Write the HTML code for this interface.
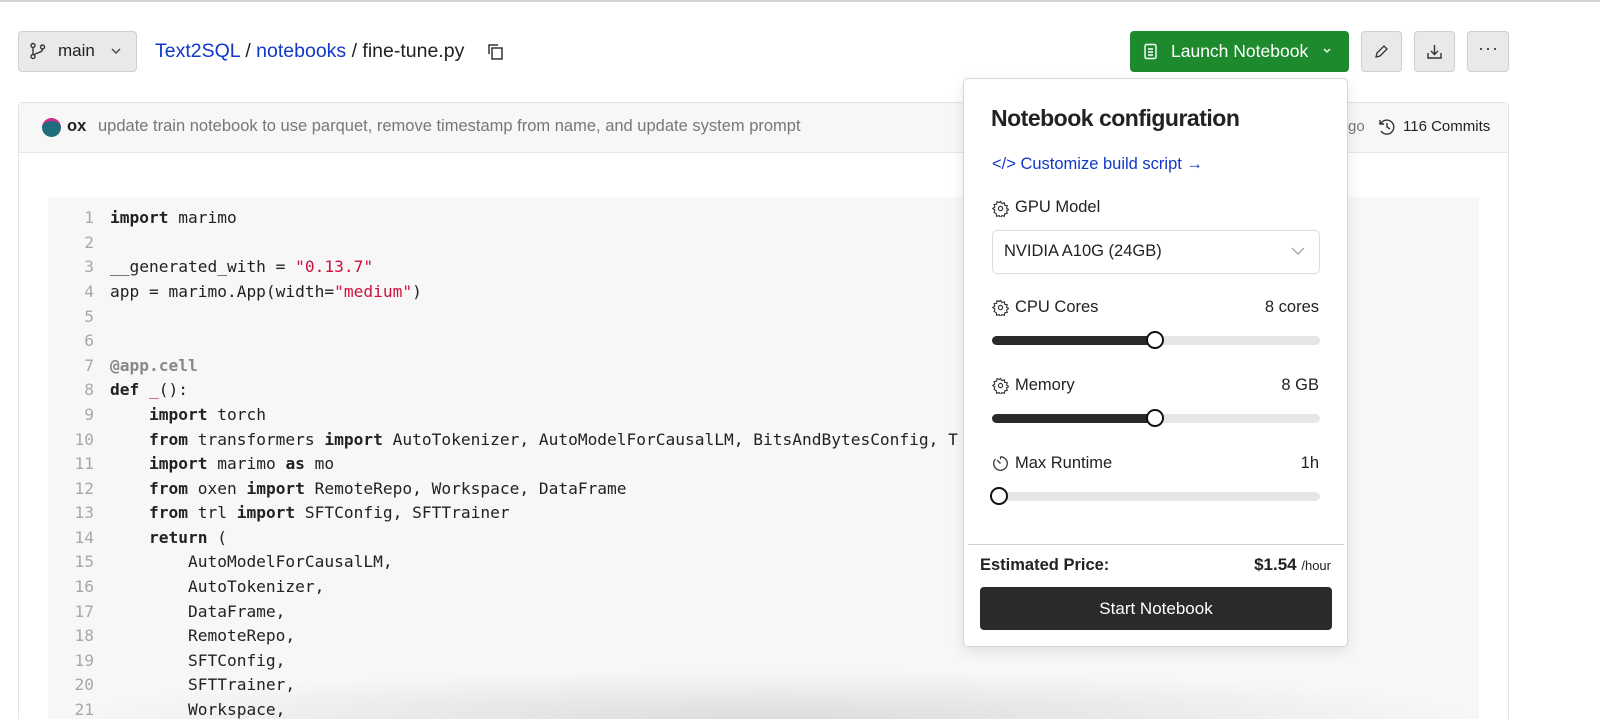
<!DOCTYPE html>
<html style="width:1600px;height:719px;overflow:hidden"><head><style>
*{box-sizing:border-box;margin:0;padding:0}
body{width:1600px;height:719px;overflow:hidden;background:#fff;font-family:"Liberation Sans",sans-serif;color:#222;position:relative}
.topline{position:absolute;left:0;top:0;width:1600px;height:2px;background:#d4d4d4}
.btn{position:absolute;border:1px solid #cfcfcf;background:#e9e9e9;border-radius:4px}
.abs{position:absolute}
.box{position:absolute;left:18px;top:102px;width:1491px;height:617px;border:1px solid #e3e3e3;border-bottom:none;border-radius:4px 4px 0 0}
.hdr{position:absolute;left:0;top:0;width:100%;height:50px;background:#f7f7f7;border-bottom:1px solid #e6e6e6}
.code{position:absolute;left:48px;top:197px;width:1431px;height:522px;background:#f7f7f7;font-family:"DejaVu Sans Mono",monospace;font-size:16.2px;overflow:hidden}
.ln{position:absolute;left:0;width:46px;text-align:right;color:#a8a8a8}
.tx{position:absolute;left:62px;white-space:pre;color:#222}
b{font-weight:bold}
.s{color:#d0103a}
.pop{position:absolute;left:963px;top:78px;width:385px;height:569px;background:#fff;border:1px solid #d6d6d6;border-radius:5px;box-shadow:0 4px 14px rgba(0,0,0,.10)}
.lbl{position:absolute;left:51px;font-size:16.5px;color:#222}
.val{position:absolute;right:28px;font-size:16.5px;color:#222}
.track{position:absolute;left:28px;width:328px;height:9px;border-radius:5px;background:#e6e6e6}
.fill{position:absolute;left:0;top:0;height:9px;border-radius:5px;background:#2a2a2a}
.knob{position:absolute;width:18px;height:18px;border-radius:50%;background:#fff;border:2px solid #111;top:-5px}
.shade{position:absolute;left:60px;top:670px;width:1420px;height:49px;background:radial-gradient(ellipse 50% 100% at 50% 100%,rgba(0,0,0,.11),rgba(0,0,0,0) 100%)}
</style></head><body>
<div class="topline"></div>

<div class="btn" style="left:18px;top:31px;width:119px;height:41px"></div>
<svg class="abs" style="left:29px;top:42px" width="18" height="18" viewBox="0 0 18 18" fill="none" stroke="#333" stroke-width="1.4"><circle cx="4" cy="3.5" r="2"/><circle cx="4" cy="14.5" r="2"/><circle cx="13.5" cy="5" r="2"/><path d="M4 5.5v7M13.5 7c0 4-6 3-8.5 6"/></svg>
<div class="abs" style="left:58px;top:41px;font-size:17px;color:#222">main</div>
<svg class="abs" style="left:110px;top:47px" width="12" height="8" viewBox="0 0 12 8" fill="none" stroke="#444" stroke-width="1.4"><path d="M2 2l4 4 4-4"/></svg>

<div class="abs" style="left:155px;top:40px;font-size:19.5px;color:#222;white-space:nowrap"><span style="color:#1238c8">Text2SQL</span> / <span style="color:#1238c8">notebooks</span> / fine-tune.py</div>
<svg class="abs" style="left:486px;top:42px" width="20" height="20" viewBox="0 0 20 20" fill="none" stroke="#333" stroke-width="1.5"><path d="M3 12V3h9"/><rect x="6" y="6" width="10" height="11"/></svg>

<div class="abs" style="left:1130px;top:31px;width:219px;height:41px;background:#1e8a2e;border-radius:4px"></div>
<svg class="abs" style="left:1143px;top:43px" width="16" height="18" viewBox="0 0 16 18" fill="none" stroke="#fff" stroke-width="1.4"><rect x="2" y="1.5" width="11" height="14" rx="1.5"/><path d="M5 6h5M5 9h5M5 12h5"/></svg>
<div class="abs" style="left:1171px;top:41px;font-size:17.5px;color:#fff">Launch Notebook</div>
<svg class="abs" style="left:1322px;top:47px" width="10" height="8" viewBox="0 0 10 8" fill="none" stroke="#fff" stroke-width="1.3"><path d="M2 2l3 3 3-3"/></svg>

<div class="btn" style="left:1361px;top:31px;width:41px;height:41px"></div>
<svg class="abs" style="left:1373px;top:43px" width="17" height="17" viewBox="0 0 17 17" fill="none" stroke="#333" stroke-width="1.3"><path d="M3 14l1-4 7-7 3 3-7 7z"/></svg>
<div class="btn" style="left:1414px;top:31px;width:41px;height:41px"></div>
<svg class="abs" style="left:1425px;top:42px" width="19" height="19" viewBox="0 0 19 19" fill="none" stroke="#333" stroke-width="1.4"><path d="M9.5 3v9M6 9l3.5 3.5L13 9M3 11v5h13v-5"/></svg>
<div class="btn" style="left:1467px;top:31px;width:42px;height:41px"></div>
<div class="abs" style="left:1478px;top:38px;font-size:18px;color:#333;letter-spacing:1px">···</div>

<div class="box"><div class="hdr"></div></div>
<div class="abs" style="left:42px;top:118px;width:19px;height:19px;border-radius:50%;background:#1e6d7c;border-top:3px solid #d6278a"></div>
<div class="abs" style="left:67px;top:117px;font-size:16.5px;font-weight:bold;color:#222">ox</div>
<div class="abs" style="left:98px;top:117px;font-size:16.5px;color:#777;white-space:nowrap">update train notebook to use parquet, remove timestamp from name, and update system prompt</div>
<div class="abs" style="left:1348px;top:118px;font-size:15px;color:#777">go</div>
<svg class="abs" style="left:1377px;top:117px" width="20" height="20" viewBox="0 0 20 20" fill="none" stroke="#333" stroke-width="1.4"><path d="M3.5 7A7 7 0 1 1 4 14M3 3v4h4M10 6v4l3 2"/></svg>
<div class="abs" style="left:1403px;top:118px;font-size:15px;color:#222">116 Commits</div>

<div class="code">
<div class="ln" style="top:11px">1</div><div class="tx" style="top:11px"><b>import</b> marimo</div>
<div class="ln" style="top:36px">2</div>
<div class="ln" style="top:60px">3</div><div class="tx" style="top:60px">__generated_with = <span class="s">"0.13.7"</span></div>
<div class="ln" style="top:85px">4</div><div class="tx" style="top:85px">app = marimo.App(width=<span class="s">"medium"</span>)</div>
<div class="ln" style="top:110px">5</div>
<div class="ln" style="top:134px">6</div>
<div class="ln" style="top:159px">7</div><div class="tx" style="top:159px;color:#888"><b>@app.cell</b></div>
<div class="ln" style="top:183px">8</div><div class="tx" style="top:183px"><b>def</b> <span class="s">_</span>():</div>
<div class="ln" style="top:208px">9</div><div class="tx" style="top:208px">    <b>import</b> torch</div>
<div class="ln" style="top:233px">10</div><div class="tx" style="top:233px">    <b>from</b> transformers <b>import</b> AutoTokenizer, AutoModelForCausalLM, BitsAndBytesConfig, T</div>
<div class="ln" style="top:257px">11</div><div class="tx" style="top:257px">    <b>import</b> marimo <b>as</b> mo</div>
<div class="ln" style="top:282px">12</div><div class="tx" style="top:282px">    <b>from</b> oxen <b>import</b> RemoteRepo, Workspace, DataFrame</div>
<div class="ln" style="top:306px">13</div><div class="tx" style="top:306px">    <b>from</b> trl <b>import</b> SFTConfig, SFTTrainer</div>
<div class="ln" style="top:331px">14</div><div class="tx" style="top:331px">    <b>return</b> (</div>
<div class="ln" style="top:355px">15</div><div class="tx" style="top:355px">        AutoModelForCausalLM,</div>
<div class="ln" style="top:380px">16</div><div class="tx" style="top:380px">        AutoTokenizer,</div>
<div class="ln" style="top:405px">17</div><div class="tx" style="top:405px">        DataFrame,</div>
<div class="ln" style="top:429px">18</div><div class="tx" style="top:429px">        RemoteRepo,</div>
<div class="ln" style="top:454px">19</div><div class="tx" style="top:454px">        SFTConfig,</div>
<div class="ln" style="top:478px">20</div><div class="tx" style="top:478px">        SFTTrainer,</div>
<div class="ln" style="top:503px">21</div><div class="tx" style="top:503px">        Workspace,</div>
</div>
<div class="shade"></div>

<div class="pop">
<div class="abs" style="left:27px;top:26px;font-size:23px;font-weight:bold;color:#222;letter-spacing:-0.5px">Notebook configuration</div>
<div class="abs" style="left:28px;top:76px;font-size:16.5px;color:#1238c8">&lt;/&gt; Customize build script →</div>
<svg class="abs" style="left:28px;top:121px" width="17" height="17" viewBox="0 0 24 24" fill="none" stroke="#333" stroke-width="1.6"><circle cx="12" cy="12" r="3"/><path d="M12 2l2 3 3.5-1 .5 3.5 3.5.5-1 3.5 3 2-3 2 1 3.5-3.5.5-.5 3.5-3.5-1-2 3-2-3-3.5 1-.5-3.5L3 17.5 4 14l-3-2 3-2-1-3.5L6.5 6 7 2.5 10.5 3.5z"/></svg>
<div class="lbl" style="top:119px">GPU Model</div>
<div class="abs" style="left:28px;top:151px;width:328px;height:44px;border:1px solid #dcdcdc;border-radius:5px"></div>
<div class="abs" style="left:40px;top:163px;font-size:16.5px;color:#222">NVIDIA A10G (24GB)</div>
<svg class="abs" style="left:326px;top:167px" width="16" height="10" viewBox="0 0 16 10" fill="none" stroke="#aaa" stroke-width="1.5"><path d="M2 2l6 6 6-6"/></svg>

<svg class="abs" style="left:28px;top:220px" width="17" height="17" viewBox="0 0 24 24" fill="none" stroke="#333" stroke-width="1.6"><circle cx="12" cy="12" r="3"/><path d="M12 2l2 3 3.5-1 .5 3.5 3.5.5-1 3.5 3 2-3 2 1 3.5-3.5.5-.5 3.5-3.5-1-2 3-2-3-3.5 1-.5-3.5L3 17.5 4 14l-3-2 3-2-1-3.5L6.5 6 7 2.5 10.5 3.5z"/></svg>
<div class="lbl" style="top:219px">CPU Cores</div><div class="val" style="top:219px">8 cores</div>
<div class="track" style="top:257px"><div class="fill" style="width:164px"></div><div class="knob" style="left:154px"></div></div>

<svg class="abs" style="left:28px;top:298px" width="17" height="17" viewBox="0 0 24 24" fill="none" stroke="#333" stroke-width="1.6"><circle cx="12" cy="12" r="3"/><path d="M12 2l2 3 3.5-1 .5 3.5 3.5.5-1 3.5 3 2-3 2 1 3.5-3.5.5-.5 3.5-3.5-1-2 3-2-3-3.5 1-.5-3.5L3 17.5 4 14l-3-2 3-2-1-3.5L6.5 6 7 2.5 10.5 3.5z"/></svg>
<div class="lbl" style="top:297px">Memory</div><div class="val" style="top:297px">8 GB</div>
<div class="track" style="top:335px"><div class="fill" style="width:164px"></div><div class="knob" style="left:154px"></div></div>

<svg class="abs" style="left:28px;top:376px" width="17" height="17" viewBox="0 0 20 20" fill="none" stroke="#333" stroke-width="1.5"><path d="M10 2a8 8 0 1 1-6 2.7M10 2v3M6 6l4 4"/></svg>
<div class="lbl" style="top:375px">Max Runtime</div><div class="val" style="top:375px">1h</div>
<div class="track" style="top:413px"><div class="knob" style="left:-2px"></div></div>

<div class="abs" style="left:4px;top:465px;width:376px;height:1px;background:#d0d0d0"></div>
<div class="abs" style="left:16px;top:477px;font-size:16.5px;font-weight:bold;color:#222">Estimated Price:</div>
<div class="abs" style="right:16px;top:476px;font-size:17px;font-weight:bold;color:#222">$1.54 <span style="font-weight:normal;font-size:13px">/hour</span></div>
<div class="abs" style="left:16px;top:508px;width:352px;height:43px;background:#2a2a2a;border-radius:4px;color:#fff;font-size:17px;text-align:center;line-height:43px">Start Notebook</div>
</div>
</body></html>
